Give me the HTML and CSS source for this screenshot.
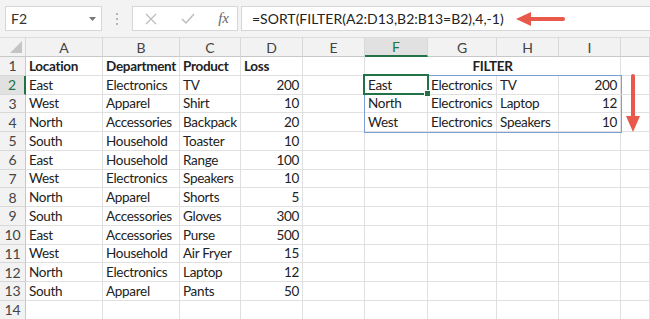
FILE: index.html
```html
<!DOCTYPE html>
<html lang="en">
<head>
    <meta charset="UTF-8">
    <title>Excel SORT FILTER</title>
    <link rel="stylesheet" href="styles.css">
</head>
<body>

    <div class="toolbar">
        <div class="namebox">
            <span>F2</span>
            <svg class="caret" width="7" height="4" viewBox="0 0 7 4"><path d="M0 0h7L3.5 4z" fill="#777"/></svg>
        </div>
        <div class="grip"><i></i><i></i><i></i></div>
        <div class="fxbox">
            <svg width="14" height="14" viewBox="0 0 14 14"><path d="M2 2l10 10M12 2L2 12" stroke="#bdbdbd" stroke-width="1.3" fill="none"/></svg>
            <svg width="16" height="14" viewBox="0 0 16 14"><path d="M2 7l4 4 8-9" stroke="#bdbdbd" stroke-width="1.5" fill="none"/></svg>
            <span class="fx">fx</span>
        </div>
        <div class="formula">
            <span>=SORT(FILTER(A2:D13,B2:B13=B2),4,-1)</span>
            <svg class="arrow-left" width="50" height="14" viewBox="0 0 50 14"><path d="M13 7h34" stroke="#e8584b" stroke-width="4" stroke-linecap="round"/><path d="M0 7l15-7v14z" fill="#e8584b"/></svg>
        </div>
    </div>

    <div class="sheet">
        <div class="row head">
            <div class="hd corner"><span></span></div>
            <div class="hd">A</div><div class="hd">B</div><div class="hd">C</div><div class="hd">D</div>
            <div class="hd">E</div><div class="hd active-col">F</div><div class="hd">G</div><div class="hd">H</div>
            <div class="hd">I</div><div class="hd"></div>
        </div>

        <div class="row">
            <div class="rh">1</div>
            <div class="c b">Location</div><div class="c b">Department</div><div class="c b">Product</div><div class="c b">Loss</div>
            <div class="c"></div><div class="c title">FILTER</div><div class="c"></div>
        </div>

        <div class="row">
            <div class="rh active-row">2</div>
            <div class="c">East</div><div class="c">Electronics</div><div class="c">TV</div><div class="c n">200</div>
            <div class="c"></div>
            <div class="c anchor">East
                <div class="spill"></div>
                <div class="selected"><span class="handle"></span></div>
            </div>
            <div class="c">Electronics</div><div class="c">TV</div><div class="c n">200</div>
            <div class="c anchor">
                <svg class="down" width="14" height="58" viewBox="0 0 14 58"><path d="M7 2v42" stroke="#e8584b" stroke-width="4" stroke-linecap="round"/><path d="M0 42h14L7 58z" fill="#e8584b"/></svg>
            </div>
        </div>

        <div class="row">
            <div class="rh">3</div>
            <div class="c">West</div><div class="c">Apparel</div><div class="c">Shirt</div><div class="c n">10</div>
            <div class="c"></div><div class="c">North</div><div class="c">Electronics</div><div class="c">Laptop</div><div class="c n">12</div><div class="c"></div>
        </div>

        <div class="row">
            <div class="rh">4</div>
            <div class="c">North</div><div class="c">Accessories</div><div class="c">Backpack</div><div class="c n">20</div>
            <div class="c"></div><div class="c">West</div><div class="c">Electronics</div><div class="c">Speakers</div><div class="c n">10</div><div class="c"></div>
        </div>

        <div class="row">
            <div class="rh">5</div>
            <div class="c">South</div><div class="c">Household</div><div class="c">Toaster</div><div class="c n">10</div>
            <div class="c"></div><div class="c"></div><div class="c"></div><div class="c"></div><div class="c"></div><div class="c"></div>
        </div>

        <div class="row">
            <div class="rh">6</div>
            <div class="c">East</div><div class="c">Household</div><div class="c">Range</div><div class="c n">100</div>
            <div class="c"></div><div class="c"></div><div class="c"></div><div class="c"></div><div class="c"></div><div class="c"></div>
        </div>

        <div class="row">
            <div class="rh">7</div>
            <div class="c">West</div><div class="c">Electronics</div><div class="c">Speakers</div><div class="c n">10</div>
            <div class="c"></div><div class="c"></div><div class="c"></div><div class="c"></div><div class="c"></div><div class="c"></div>
        </div>

        <div class="row">
            <div class="rh">8</div>
            <div class="c">North</div><div class="c">Apparel</div><div class="c">Shorts</div><div class="c n">5</div>
            <div class="c"></div><div class="c"></div><div class="c"></div><div class="c"></div><div class="c"></div><div class="c"></div>
        </div>

        <div class="row">
            <div class="rh">9</div>
            <div class="c">South</div><div class="c">Accessories</div><div class="c">Gloves</div><div class="c n">300</div>
            <div class="c"></div><div class="c"></div><div class="c"></div><div class="c"></div><div class="c"></div><div class="c"></div>
        </div>

        <div class="row">
            <div class="rh">10</div>
            <div class="c">East</div><div class="c">Accessories</div><div class="c">Purse</div><div class="c n">500</div>
            <div class="c"></div><div class="c"></div><div class="c"></div><div class="c"></div><div class="c"></div><div class="c"></div>
        </div>

        <div class="row">
            <div class="rh">11</div>
            <div class="c">West</div><div class="c">Household</div><div class="c">Air Fryer</div><div class="c n">15</div>
            <div class="c"></div><div class="c"></div><div class="c"></div><div class="c"></div><div class="c"></div><div class="c"></div>
        </div>

        <div class="row">
            <div class="rh">12</div>
            <div class="c">North</div><div class="c">Electronics</div><div class="c">Laptop</div><div class="c n">12</div>
            <div class="c"></div><div class="c"></div><div class="c"></div><div class="c"></div><div class="c"></div><div class="c"></div>
        </div>

        <div class="row">
            <div class="rh">13</div>
            <div class="c">South</div><div class="c">Apparel</div><div class="c">Pants</div><div class="c n">50</div>
            <div class="c"></div><div class="c"></div><div class="c"></div><div class="c"></div><div class="c"></div><div class="c"></div>
        </div>

        <div class="row">
            <div class="rh">14</div>
            <div class="c"></div><div class="c"></div><div class="c"></div><div class="c"></div>
            <div class="c"></div><div class="c"></div><div class="c"></div><div class="c"></div><div class="c"></div><div class="c"></div>
        </div>
    </div>

</body>
</html>
```

FILE: styles.css
```css
body {
    margin: 0;
    background: #fff;
    font-family: Lato, "Liberation Sans", sans-serif;
    color: #222;
    overflow: hidden;
}
.toolbar {
    display: flex;
    align-items: center;
    height: 38px;
    padding: 0 0 0 5px;
    background: #f3f3f3;
    border-bottom: 1px solid #dcdcdc;
    box-sizing: border-box;
}
.namebox {
    display: flex;
    align-items: center;
    justify-content: space-between;
    width: 97px;
    height: 25px;
    padding: 0 5px 0 5px;
    box-sizing: border-box;
    background: #fff;
    border: 1px solid #d6d6d6;
    font-size: 14px;
    color: #333;
}
.grip {
    display: flex;
    flex-direction: column;
    gap: 3px;
    margin: 0 14px 0 14px;
}
.grip i {
    display: block;
    width: 2px;
    height: 2px;
    background: #b5b5b5;
}
.fxbox {
    display: flex;
    align-items: center;
    justify-content: space-between;
    width: 106px;
    height: 25px;
    padding: 0 8px 0 11px;
    box-sizing: border-box;
    background: #fff;
    border: 1px solid #d6d6d6;
}
.fx {
    font-family: "Liberation Serif", serif;
    font-style: italic;
    font-size: 15px;
    color: #666;
}
.formula {
    flex: 1;
    display: flex;
    align-items: center;
    height: 25px;
    margin-left: 3px;
    padding-left: 10px;
    box-sizing: border-box;
    background: #fff;
    border: 1px solid #d6d6d6;
    border-right: none;
    font-size: 14px;
    color: #222;
}
.arrow-left {
    margin-left: 12px;
}
.sheet {
    font-size: 13.5px;
    letter-spacing: -0.3px;
}
.row {
    display: grid;
    grid-template-columns: 26px 77px 77px 61px 62px 62px 63px 69px 62px 62px 1fr;
    height: 18.75px;
}
.row.head {
    height: 19px;
}
.hd {
    display: flex;
    align-items: center;
    justify-content: center;
    background: #f2f2f2;
    border-right: 1px solid #d8d8d8;
    border-bottom: 1px solid #c8c8c8;
    color: #444;
    font-size: 14px;
    letter-spacing: 0;
}
.corner {
    position: relative;
}
.corner span {
    position: absolute;
    right: 3px;
    bottom: 3px;
    width: 0;
    height: 0;
    border-left: 12px solid transparent;
    border-bottom: 12px solid #c4c4c4;
}
.active-col {
    background: #e1e1e1;
    border-bottom: 2px solid #217346;
    color: #217346;
}
.rh {
    display: flex;
    align-items: center;
    justify-content: center;
    background: #f2f2f2;
    border-right: 1px solid #c8c8c8;
    border-bottom: 1px solid #d8d8d8;
    color: #444;
    font-size: 14px;
    letter-spacing: 0;
}
.active-row {
    background: #e1e1e1;
    border-right: 2px solid #217346;
    color: #217346;
}
.c {
    display: flex;
    align-items: center;
    padding: 0 3px;
    border-right: 1px solid #e0e0e0;
    border-bottom: 1px solid #e0e0e0;
    white-space: nowrap;
    min-width: 0;
}
.b {
    font-weight: bold;
}
.n {
    justify-content: flex-end;
}
.title {
    grid-column: span 4;
    justify-content: center;
    font-weight: bold;
}
.anchor {
    position: relative;
}
.spill {
    position: absolute;
    left: -1px;
    top: -1px;
    width: 256px;
    height: 56px;
    border: 1px solid #7b9fd6;
    pointer-events: none;
}
.selected {
    position: absolute;
    left: -2px;
    top: -2px;
    width: 62px;
    height: 17px;
    border: 2px solid #217346;
    pointer-events: none;
}
.handle {
    position: absolute;
    right: -4px;
    bottom: -4px;
    width: 5px;
    height: 5px;
    background: #217346;
    border: 1px solid #fff;
}
.down {
    position: absolute;
    left: 5px;
    top: -2px;
}
```
